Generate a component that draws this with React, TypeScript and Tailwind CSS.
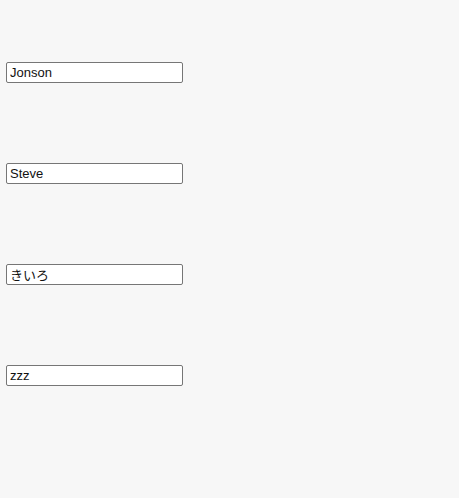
import React from "react";

export default function App() {
  const names = ["Jonson", "Steve", "きいろ", "zzz"];
  return (
    <div className="min-h-[498px] w-full bg-[#f7f7f7] pt-[62px] pl-[6px] flex flex-col gap-[80px]">
      {names.map((n) => (
        <input
          key={n}
          type="text"
          defaultValue={n}
          className="block w-[177px] h-[21px] bg-white border border-[#767676] rounded-[2px] px-[3px] text-[13px] leading-none text-[#111] outline-none"
          style={{ fontFamily: '"Liberation Sans", Arial, "Noto Sans CJK JP", sans-serif' }}
        />
      ))}
    </div>
  );
}
